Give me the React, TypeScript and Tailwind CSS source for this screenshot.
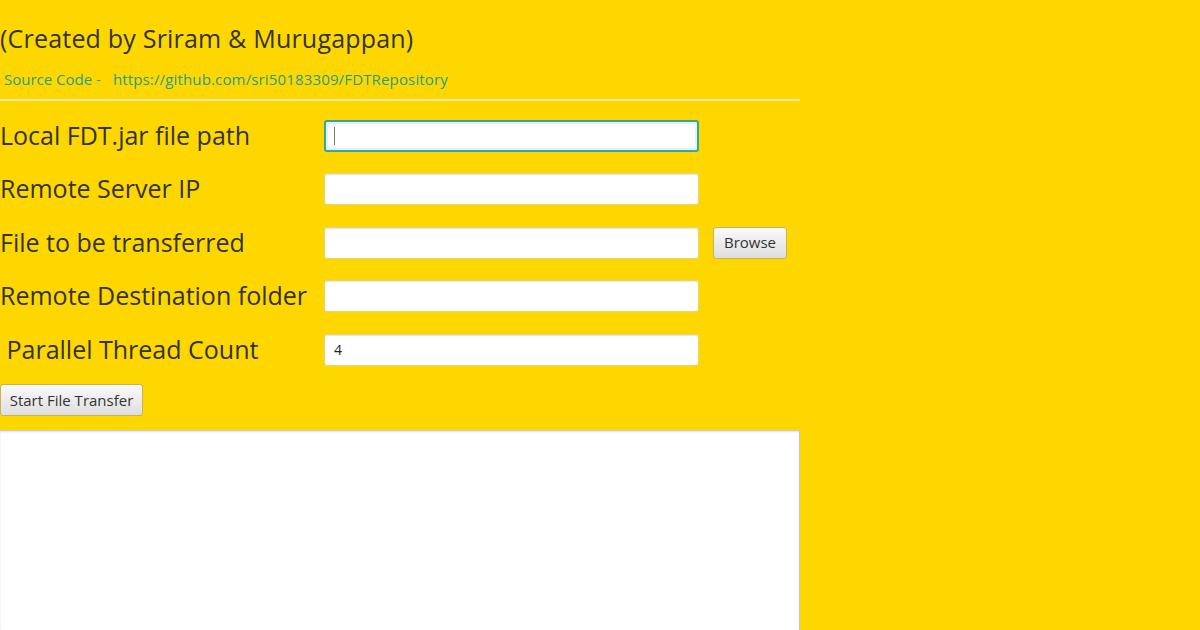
import React from "react";

const rows = [
  { label: "Local FDT.jar file path", value: "", focused: true },
  { label: "Remote Server IP", value: "" },
  { label: "File to be transferred", value: "", browse: true },
  { label: "Remote Destination folder", value: "" },
  { label: " Parallel Thread Count", value: "4" },
];

export default function App() {
  return (
    <div
      className="w-[1200px] h-[630px] bg-[#ffd700] overflow-hidden text-[#333]"
      style={{ fontFamily: '"Open Sans", "Noto Sans", sans-serif' }}
    >
      <div className="w-[800px] flex flex-col h-full">
        <div className="h-[80px] pt-[20px]">
          <div className="text-[25px] leading-[36px] tracking-[0.2px]">(Created by Sriram &amp; Murugappan)</div>
        </div>
        <div className="flex items-center h-[18px] text-[15px] text-[#24a08e] pl-[4px] -mt-[10px]">
          <span>Source Code -</span>
          <span className="ml-[12px] tracking-[0.15px]">https://github.com/sri50183309/FDTRepository</span>
        </div>
        <div className="h-[2px] bg-[#f2e6a0] mt-[11px]" />

        <div className="flex flex-col mt-[19px] gap-[22.5px]">
          {rows.map((r) => (
            <div key={r.label} className="flex items-center h-[31px]">
              <div className="w-[324px] text-[25px] whitespace-pre">{r.label}</div>
              <div
                className={
                  r.focused
                    ? "w-[375px] h-[32px] bg-white rounded-[3px] border-2 border-[#3aa59c] shadow-[inset_0_0_0_2px_#dff4f7] flex items-center pl-[8px]"
                    : "w-[375px] h-[32px] bg-white rounded-[3px] border border-[#e8d27a] shadow-[inset_0_1px_1px_#e6e6e6] flex items-center pl-[9px]"
                }
              >
                {r.focused && <div className="w-[1px] h-[18px] bg-[#777]" />}
                <span className="text-[14px] text-[#222]">{r.value}</span>
              </div>
              {r.browse && (
                <button className="ml-[14px] w-[74px] h-[32px] rounded-[3px] border border-[#c7b25a] bg-gradient-to-b from-[#fafafa] to-[#dedede] text-[15px] text-[#333]">
                  Browse
                </button>
              )}
            </div>
          ))}
        </div>

        <div className="mt-[19px]">
          <button className="w-[143px] h-[32px] rounded-[3px] border border-[#c7b25a] bg-gradient-to-b from-[#fafafa] to-[#dedede] text-[15px] text-[#333]">
            Start File Transfer
          </button>
        </div>

        <div className="mt-[14px] flex-1 bg-white border-t border-r border-[#c9c9c9] shadow-[inset_0_1px_2px_#e0e0e0]" />
      </div>
    </div>
  );
}
